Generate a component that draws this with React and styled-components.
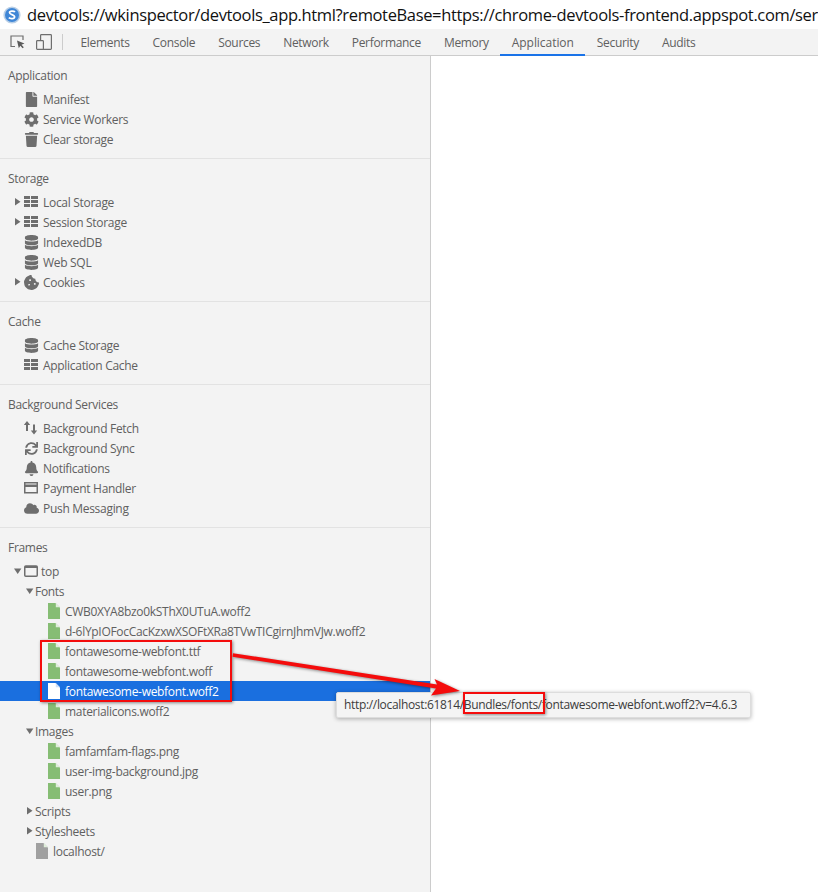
import React from "react";
import styled, { createGlobalStyle } from "styled-components";
import {
	FaBell,
	FaCloud,
	FaCog,
	FaCookieBite,
	FaDatabase,
	FaFile,
	FaSync,
	FaTrash,
} from "react-icons/fa";

const GlobalStyle = createGlobalStyle`
	html, body {
		margin: 0;
		padding: 0;
		background: #ffffff;
	}
	* {
		box-sizing: border-box;
	}
`;

const Grid = () => (
	<svg width="14" height="12" viewBox="0 0 14 12" fill="#6e6e6e">
		<rect x="0" y="0" width="6" height="3" />
		<rect x="7" y="0" width="7" height="3" />
		<rect x="0" y="4" width="6" height="3" />
		<rect x="7" y="4" width="7" height="3" />
		<rect x="0" y="8" width="6" height="3" />
		<rect x="7" y="8" width="7" height="3" />
	</svg>
);

const UpDown = () => (
	<svg width="14" height="14" viewBox="0 0 14 14" fill="#6e6e6e">
		<path d="M3 0l3.2 4H4v6H2V4H-.2zM10 13.5L6.8 9.5H9v-6h2v6h2.2z" />
	</svg>
);

const Card = () => (
	<svg width="14" height="12" viewBox="0 0 14 12">
		<rect x="0.75" y="0.75" width="12.5" height="10" fill="none" stroke="#6e6e6e" strokeWidth="1.5" />
		<rect x="1" y="2.5" width="12" height="2.5" fill="#6e6e6e" />
	</svg>
);

const Frame = () => (
	<svg width="14" height="12" viewBox="0 0 14 12">
		<rect x="0.75" y="1" width="12.5" height="10.2" rx="1" fill="none" stroke="#6e6e6e" strokeWidth="1.5" />
		<rect x="1" y="1" width="12" height="2" fill="#6e6e6e" />
	</svg>
);

const PageFile = ({ tone }) => {
	const fill = { green: "#86bd74", gray: "#a0a0a0", white: "#ffffff" }[tone];
	return (
		<svg width="12" height="16" viewBox="0 0 12 16">
			<path d="M0 0h7.5L12 4.500V16H0z" fill={fill} />
			<path d="M7.800 0L12 4.200H7.800z" fill={tone === "white" ? "#cfe0f8" : "#dfeeda"} />
		</svg>
	);
};

const Arrow = ({ open }) => (
	<ArrowBox>
		<svg width="8" height="8" viewBox="0 0 8 8" fill="#6e6e6e">
			{open ? <path d="M0 1.500h7.400L3.700 7z" /> : <path d="M1 0v7.400L6.500 3.700z" />}
		</svg>
	</ArrowBox>
);

const tabs = [
	"Elements",
	"Console",
	"Sources",
	"Network",
	"Performance",
	"Memory",
	"Application",
	"Security",
	"Audits",
];

const sections = [
	{
		title: "Application",
		rows: [
			{ label: "Manifest", icon: <FaFile size={15} /> },
			{ label: "Service Workers", icon: <FaCog size={15} /> },
			{ label: "Clear storage", icon: <FaTrash size={15} /> },
		],
	},
	{
		title: "Storage",
		rows: [
			{ label: "Local Storage", icon: <Grid />, arrow: true },
			{ label: "Session Storage", icon: <Grid />, arrow: true },
			{ label: "IndexedDB", icon: <FaDatabase size={15} /> },
			{ label: "Web SQL", icon: <FaDatabase size={15} /> },
			{ label: "Cookies", icon: <FaCookieBite size={15} />, arrow: true },
		],
	},
	{
		title: "Cache",
		rows: [
			{ label: "Cache Storage", icon: <FaDatabase size={15} /> },
			{ label: "Application Cache", icon: <Grid /> },
		],
	},
	{
		title: "Background Services",
		rows: [
			{ label: "Background Fetch", icon: <UpDown /> },
			{ label: "Background Sync", icon: <FaSync size={13} /> },
			{ label: "Notifications", icon: <FaBell size={15} /> },
			{ label: "Payment Handler", icon: <Card /> },
			{ label: "Push Messaging", icon: <FaCloud size={15} /> },
		],
	},
];

const fontFiles = [
	{ name: "CWB0XYA8bzo0kSThX0UTuA.woff2" },
	{ name: "d-6lYpIOFocCacKzxwXSOFtXRa8TVwTICgirnJhmVJw.woff2" },
	{ name: "fontawesome-webfont.ttf" },
	{ name: "fontawesome-webfont.woff" },
	{ name: "fontawesome-webfont.woff2", selected: true },
	{ name: "materialicons.woff2" },
];

const imageFiles = ["famfamfam-flags.png", "user-img-background.jpg", "user.png"];

const App = () => {
	return (
		<Page>
			<GlobalStyle />
			<TitleBar>
				<svg width="18" height="18" viewBox="0 0 18 18">
					<circle cx="9" cy="9" r="8.600" fill="#b9cfe6" />
					<circle cx="9" cy="9" r="7" fill="#3f86d6" />
					<path
						d="M12 6c-1-1.200-5.400-1.500-5.500.6C6.400 9 11.700 8.300 11.600 11c-.1 2-4.400 2-5.800.7"
						fill="none"
						stroke="#ffffff"
						strokeWidth="1.700"
					/>
				</svg>
				<Address>
					devtools://wkinspector/devtools_app.html?remoteBase=https://chrome-devtools-frontend.appspot.com/ser
				</Address>
			</TitleBar>
			<Toolbar>
				<ToolIcons>
					<svg width="16" height="14" viewBox="0 0 16 14">
						<path d="M5 11.500H1V1h12v4" fill="none" stroke="#6e6e6e" strokeWidth="1.200" />
						<path d="M7 5.500l7.500 3-3 1.200 2.300 2.500-1.200 1-2.300-2.500-1.500 2.500z" fill="#5a5a5a" />
					</svg>
					<svg width="16" height="16" viewBox="0 0 16 16">
						<rect x="4.600" y="0.600" width="10.800" height="14.800" rx="0.800" fill="none" stroke="#6e6e6e" strokeWidth="1.200" />
						<rect x="0.600" y="6.600" width="6.800" height="8.800" rx="0.800" fill="#f3f3f3" stroke="#6e6e6e" strokeWidth="1.200" />
					</svg>
				</ToolIcons>
				<ToolDivider />
				<Tabs>
					{tabs.map((tab) => (
						<Tab key={tab} $active={tab === "Application"}>
							{tab}
						</Tab>
					))}
				</Tabs>
			</Toolbar>
			<Body>
				<Sidebar>
					{sections.map((section) => (
						<Section key={section.title}>
							<SectionTitle>{section.title}</SectionTitle>
							{section.rows.map((row) => (
								<Row key={row.label} $indent={12}>
									{row.arrow ? <Arrow /> : <ArrowBox />}
									<IconBox>{row.icon}</IconBox>
									<RowLabel>{row.label}</RowLabel>
								</Row>
							))}
						</Section>
					))}
					<Section $last>
						<SectionTitle>Frames</SectionTitle>
						<Row $indent={12}>
							<Arrow open />
							<FrameIconBox>
								<Frame />
							</FrameIconBox>
							<RowLabel>top</RowLabel>
						</Row>
						<Row $indent={24}>
							<Arrow open />
							<RowLabel>Fonts</RowLabel>
						</Row>
						{fontFiles.map((file) => (
							<FileRow key={file.name} $selected={file.selected} $indent={48}>
								<PageFile tone={file.selected ? "white" : "green"} />
								<FileLabel $selected={file.selected}>{file.name}</FileLabel>
							</FileRow>
						))}
						<Row $indent={24}>
							<Arrow open />
							<RowLabel>Images</RowLabel>
						</Row>
						{imageFiles.map((name) => (
							<FileRow key={name} $indent={48}>
								<PageFile tone="green" />
								<FileLabel>{name}</FileLabel>
							</FileRow>
						))}
						<Row $indent={24}>
							<Arrow />
							<RowLabel>Scripts</RowLabel>
						</Row>
						<Row $indent={24}>
							<Arrow />
							<RowLabel>Stylesheets</RowLabel>
						</Row>
						<FileRow $indent={36}>
							<PageFile tone="gray" />
							<FileLabel>localhost/</FileLabel>
						</FileRow>
					</Section>
				</Sidebar>
				<Main />
			</Body>

			<Tooltip>http://localhost:61814/Bundles/fonts/fontawesome-webfont.woff2?v=4.6.3</Tooltip>
			<RedBox $x={40} $y={640} $w={192} $h={62} />
			<RedBox $x={463} $y={692} $w={82} $h={22} />
			<AnnotationArrow width="818" height="892" viewBox="0 0 818 892">
				<path
					d="M233 653.200L437 684.500L434.500 679L460 691L431 695.500L436 688.500L232.500 656.800z"
					fill="#f40c0c"
				/>
			</AnnotationArrow>
		</Page>
	);
};

const Page = styled.div`
	position: relative;
	width: 818px;
	height: 892px;
	overflow: hidden;
	display: flex;
	flex-direction: column;
	background: #ffffff;
	font-family: "Open Sans", "Liberation Sans", sans-serif;
	font-size: 12px;
	letter-spacing: -0.3px;
	color: #606060;
`;

const TitleBar = styled.div`
	height: 29px;
	flex: none;
	display: flex;
	align-items: center;
	gap: 6px;
	padding-left: 3px;
	background: #ffffff;
	white-space: nowrap;
	overflow: hidden;

	svg {
		flex: none;
	}
`;

const Address = styled.span`
	font-size: 16.500px;
	letter-spacing: -0.36px;
	color: #111111;
`;

const Toolbar = styled.div`
	height: 27px;
	flex: none;
	display: flex;
	align-items: stretch;
	background: #f3f3f3;
	border-bottom: 1px solid #cccccc;
`;

const ToolIcons = styled.div`
	display: flex;
	align-items: center;
	gap: 10px;
	padding-left: 10px;
`;

const ToolDivider = styled.div`
	width: 1px;
	height: 16px;
	align-self: center;
	margin: 0 6px 0 10px;
	background: #cccccc;
`;

const Tabs = styled.div`
	display: flex;
	align-items: stretch;
`;

const Tab = styled.div`
	display: flex;
	align-items: center;
	padding: 2px 11.500px 0;
	margin-bottom: -1px;
	letter-spacing: ${(p) => (p.$active ? "-0.05px" : "-0.32px")};
	border-bottom: 2px solid ${(p) => (p.$active ? "#1a73e8" : "transparent")};
`;

const Body = styled.div`
	flex: 1;
	display: flex;
	min-height: 0;
`;

const Sidebar = styled.div`
	width: 431px;
	flex: none;
	background: #f3f3f3;
	border-right: 1px solid #cccccc;
`;

const Main = styled.div`
	flex: 1;
	background: #ffffff;
`;

const Section = styled.div`
	padding: 9px 0;
	border-bottom: ${(p) => (p.$last ? "none" : "1px solid #e2e2e2")};
`;

const SectionTitle = styled.div`
	height: 20px;
	line-height: 21px;
	margin-bottom: 4px;
	padding-left: 8px;
`;

const Row = styled.div`
	height: 20px;
	display: flex;
	align-items: center;
	padding-left: ${(p) => p.$indent}px;
`;

const ArrowBox = styled.span`
	width: 11px;
	flex: none;
	display: flex;
	align-items: center;
	justify-content: center;
`;

const IconBox = styled.span`
	width: 16px;
	margin-right: 4px;
	flex: none;
	display: flex;
	align-items: center;
	justify-content: center;
	color: #6e6e6e;
`;

const FrameIconBox = styled(IconBox)`
	margin-right: 3px;
	width: 15px;
`;

const RowLabel = styled.span`
	white-space: nowrap;
`;

const FileRow = styled(Row)`
	gap: 5px;
	background: ${(p) => (p.$selected ? "#1a6fdf" : "transparent")};
`;

const FileLabel = styled.span`
	white-space: nowrap;
	color: ${(p) => (p.$selected ? "#ffffff" : "#606060")};
`;

const Tooltip = styled.div`
	position: absolute;
	left: 336px;
	top: 692px;
	width: 415px;
	height: 26px;
	line-height: 23px;
	padding-left: 7px;
	letter-spacing: -0.33px;
	white-space: nowrap;
	color: #3c3c3c;
	background: #f4f4f4;
	border: 1px solid #dddddd;
	border-radius: 2px;
	box-shadow: 0 1px 4px rgba(0, 0, 0, 0.3);
`;

const RedBox = styled.div`
	position: absolute;
	left: ${(p) => p.$x}px;
	top: ${(p) => p.$y}px;
	width: ${(p) => p.$w}px;
	height: ${(p) => p.$h}px;
	border: 2px solid #f40c0c;
	box-shadow: 1px 1px 3px rgba(0, 0, 0, 0.45);
`;

const AnnotationArrow = styled.svg`
	position: absolute;
	left: 0;
	top: 0;
	pointer-events: none;
	filter: drop-shadow(1px 1px 1.500px rgba(0, 0, 0, 0.45));
`;

export default App;
